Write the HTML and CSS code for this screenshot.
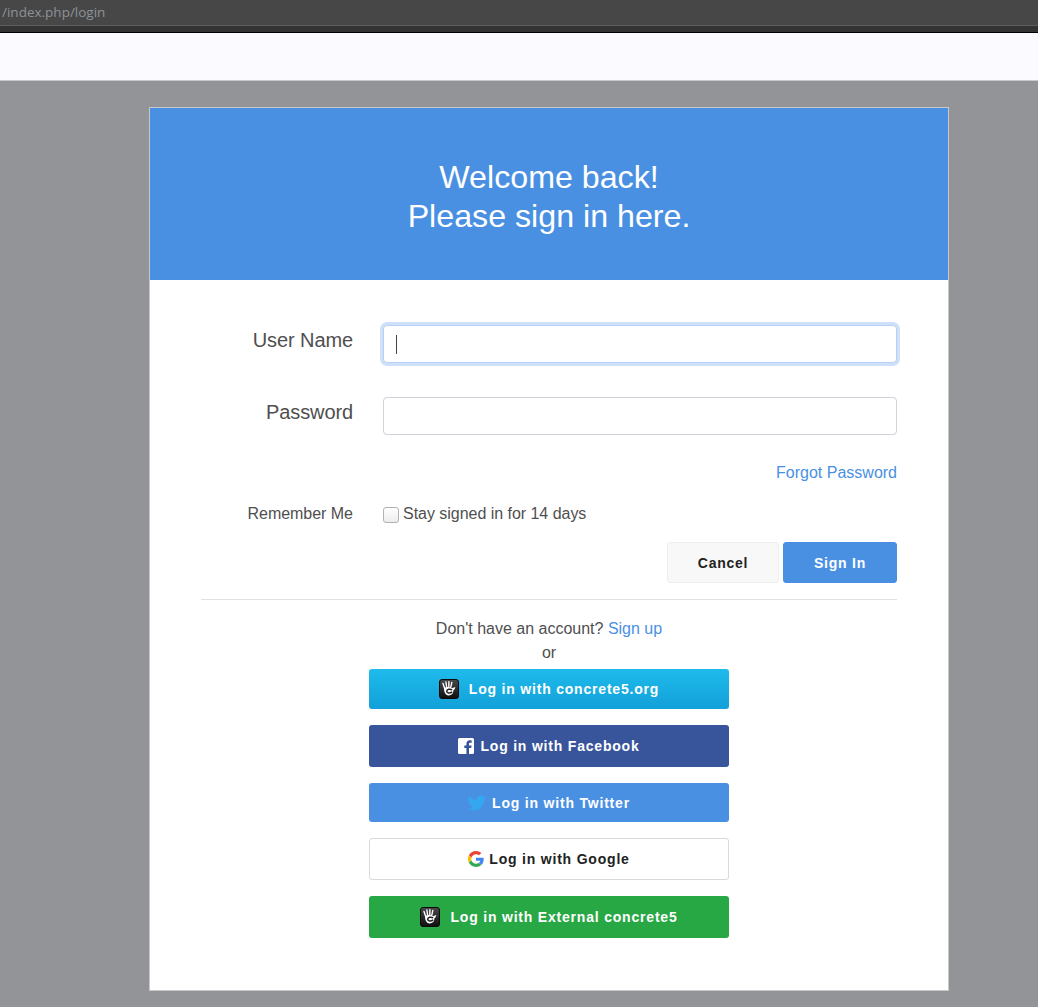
FILE: index.html
```html
<!DOCTYPE html>
<html lang="en">
<head>
<meta charset="utf-8">
<title>Login</title>
<link rel="stylesheet" href="styles.css">
</head>
<body>
<svg class="defs" width="0" height="0" aria-hidden="true">
  <defs>
    <linearGradient id="c5bg" x1="0" y1="0" x2="0" y2="1"><stop offset="0" stop-color="#4a4a4a"/><stop offset="1" stop-color="#0e0e0e"/></linearGradient>
    <symbol id="c5" viewBox="0 0 20 20">
      <rect x="0.5" y="0.5" width="19" height="19" rx="2.5" fill="url(#c5bg)" stroke="#0a0a0a"/>
      <path d="M4 4.500 5.700 9.500M6.900 3 7.700 8.500M9.900 2.600 9.800 8.300M12.800 3.400 11.700 8.700" stroke="#fff" stroke-width="1.400" stroke-linecap="round" fill="none"/>
      <path d="M5 9.200C7 7.700 11 7.700 12.800 9.300L16.300 8C16.400 9.500 15.200 10.900 14.200 11.800 14.600 14.600 12.200 16.600 9.400 16.400 6.400 16.200 4.900 12.400 5 9.200Z" fill="#fff"/>
      <path d="M13.200 11C11 9.500 7.800 10.200 7.700 12.300 7.700 14 10.400 14.700 13.200 13" stroke="#222" stroke-width="1.500" fill="none"/>
    </symbol>
  </defs>
</svg>
<header class="browser-bar"><span class="url">/index.php/login</span></header>
<div class="top-band"></div>
<main class="backdrop">
  <section class="card">
    <div class="card-head">
      <h1>Welcome back!<br>Please sign in here.</h1>
    </div>
    <form class="card-body">
      <div class="row row-user">
        <label class="label label-lg">User Name</label>
        <div class="field field-focus"><span class="caret"></span></div>
      </div>
      <div class="row row-pass">
        <label class="label label-lg">Password</label>
        <div class="field"></div>
      </div>
      <div class="forgot"><a href="#">Forgot Password</a></div>
      <div class="row row-remember">
        <label class="label">Remember Me</label>
        <div class="check-wrap"><span class="check"></span><span>Stay signed in for 14 days</span></div>
      </div>
      <div class="actions">
        <button type="button" class="btn btn-cancel">Cancel</button>
        <button type="button" class="btn btn-signin">Sign In</button>
      </div>
      <hr class="rule">
      <div class="signup">
        <p>Don't have an account? <a href="#">Sign up</a></p>
        <p class="or">or</p>
      </div>
      <div class="socials">
        <a class="social s-c5" href="#"><svg class="ico-c5" width="20" height="20"><use href="#c5"/></svg><span>Log in with concrete5.org</span></a>
        <a class="social s-fb" href="#"><svg class="ico-sm" viewBox="0 0 16 16" width="16" height="16"><path fill="#fff" d="M1.500 0h13A1.500 1.500 0 0 1 16 1.500v13a1.500 1.500 0 0 1-1.500 1.500H11V10h2.200l.4-2.500H11V6c0-.8.300-1.300 1.300-1.300h1.400V2.400c-.4 0-1.200-.1-2-.1C9.700 2.300 8.400 3.500 8.400 5.700v1.800H6.300V10h2.100v6H1.500A1.500 1.500 0 0 1 0 14.500v-13A1.500 1.500 0 0 1 1.500 0Z"/></svg><span>Log in with Facebook</span></a>
        <a class="social s-tw" href="#"><svg class="ico-sm ico-tw" viewBox="0 0 24 24" width="18" height="18"><path fill="#33a8f0" d="M23.950 4.570a10 10 0 0 1-2.820.77 4.960 4.960 0 0 0 2.160-2.720c-.950.550-2 .960-3.130 1.190a4.920 4.920 0 0 0-8.380 4.480C7.690 8.100 4.070 6.130 1.640 3.160a4.820 4.820 0 0 0-.660 2.470c0 1.710.870 3.210 2.190 4.100a4.900 4.900 0 0 1-2.230-.620v.060a4.920 4.920 0 0 0 3.950 4.830 5 5 0 0 1-2.210.080 4.940 4.940 0 0 0 4.600 3.420A9.870 9.870 0 0 1 0 19.540a14 14 0 0 0 7.560 2.210c9.050 0 14-7.500 14-13.980 0-.210 0-.420-.020-.630a9.940 9.940 0 0 0 2.410-2.550Z"/></svg><span>Log in with Twitter</span></a>
        <a class="social s-g" href="#"><svg class="ico-g" viewBox="0 0 48 48" width="16" height="16"><path fill="#ea4335" d="M24 9.500c3.500 0 6.700 1.200 9.200 3.600l6.900-6.900C35.900 2.400 30.500 0 24 0 14.600 0 6.500 5.400 2.600 13.200l8 6.200C12.400 13.700 17.700 9.500 24 9.500Z"/><path fill="#4285f4" d="M47 24.500c0-1.600-.1-3.100-.4-4.500H24v9h12.900c-.6 3-2.200 5.500-4.800 7.200l7.700 6c4.500-4.200 7.200-10.300 7.200-17.700Z"/><path fill="#fbbc05" d="M10.500 28.600a14.500 14.500 0 0 1 0-9.200l-8-6.200a24 24 0 0 0 0 21.600l8-6.200Z"/><path fill="#34a853" d="M24 48c6.500 0 11.900-2.100 15.900-5.800l-7.700-6c-2.200 1.400-4.900 2.300-8.200 2.300-6.300 0-11.600-4.200-13.500-9.900l-8 6.200C6.500 42.600 14.600 48 24 48Z"/></svg><span>Log in with Google</span></a>
        <a class="social s-ext" href="#"><svg class="ico-c5" width="20" height="20"><use href="#c5"/></svg><span>Log in with External concrete5</span></a>
      </div>
    </form>
  </section>
</main>
</body>
</html>
```
FILE: styles.css
```css
* { box-sizing: border-box; }
html, body { margin: 0; padding: 0; height: 100%; }
body {
  font-family: "Liberation Sans", Arial, sans-serif;
  color: #4f4f4f;
  background: #939498;
  overflow: hidden;
}
.defs { position: absolute; }
.browser-bar {
  height: 33px;
  background: #474748;
  border-bottom: 1px solid #000;
  box-shadow: inset 0 -6px 0 #333334, inset 0 -7px 0 #5c5c5c;
  padding-left: 2px;
  overflow: hidden;
}
.url {
  display: block;
  font-family: "Open Sans", "Noto Sans", sans-serif;
  font-size: 13.5px;
  line-height: 24px;
  color: #8d9297;
}
.top-band {
  height: 48px;
  background: #fbfaff;
  border-bottom: 1px solid #c9c9cb;
}
.backdrop { padding: 26px 0 0 149px; }
.card {
  width: 800px;
  height: 884px;
  background: #fff;
  border: 1px solid #c8c8cb;
}
.card-head {
  height: 172px;
  background: #4a90e2;
  padding-top: 50px;
  text-align: center;
}
.card-head h1 {
  margin: 0;
  font-size: 32.2px;
  font-weight: 400;
  line-height: 39px;
  color: #fff;
}
.card-body { padding: 45px 51px 0 51px; }
.row { display: flex; }
.label {
  width: 152px;
  margin-right: 30px;
  text-align: right;
  font-size: 16px;
  letter-spacing: -0.03px;
  color: #4f4f4f;
}
.label-lg { font-size: 20px; line-height: 30px; letter-spacing: -0.1px; }
.row-pass { margin-top: 34px; }
.field {
  flex: 1;
  height: 38px;
  border: 1px solid #ced4da;
  border-radius: 4px;
  background: #fff;
  display: flex;
  align-items: center;
  padding-left: 12px;
}
.field-focus {
  border-color: #b4d0f4;
  box-shadow: 0 0 0 3px #cfe1f9;
}
.caret { width: 1px; height: 19px; background: #444; }
.forgot {
  margin-top: 28px;
  text-align: right;
  font-size: 16px;
  line-height: 20px;
}
a { color: #4a90e2; text-decoration: none; }
.row-remember { margin-top: 21px; align-items: center; height: 20px; line-height: 20px; }
.check-wrap { display: flex; align-items: center; font-size: 16px; letter-spacing: -0.03px; }
.check {
  width: 16px;
  height: 16px;
  margin-right: 4px;
  margin-top: 2px;
  border: 1px solid #b5b1ad;
  border-radius: 3px;
  background: linear-gradient(#fff, #ececec);
}
.actions {
  display: flex;
  justify-content: flex-end;
  gap: 4px;
  margin-top: 18px;
}
.btn {
  height: 41px;
  border-radius: 3px;
  font-family: inherit;
  font-size: 14px;
  font-weight: 700;
  letter-spacing: 0.75px;
  padding: 0;
}
.btn-cancel { width: 112px; background: #f8f8f8; border: 1px solid #eeeeee; color: #222; }
.btn-signin { width: 114px; background: #4a90e2; border: 1px solid #4a90e2; color: #fff; }
.rule { margin: 16px 0 0; border: 0; border-top: 1px solid #e2e2e2; }
.signup {
  margin-left: 168px;
  width: 360px;
  text-align: center;
  font-size: 16px;
  line-height: 24px;
  padding-top: 17px;
}
.signup p { margin: 0; }
.socials {
  margin-left: 168px;
  margin-top: 4px;
  width: 360px;
  display: flex;
  flex-direction: column;
}
.social {
  display: flex;
  align-items: center;
  justify-content: center;
  border-radius: 3px;
  font-size: 14px;
  font-weight: 700;
  letter-spacing: 0.8px;
  color: #fff;
}
.s-c5 { height: 40px; background: linear-gradient(#1fbbec, #12a0d8); }
.s-fb { height: 42px; margin-top: 16px; background: #38549a; }
.s-tw { height: 39px; margin-top: 16px; background: #4a90e2; }
.s-g { height: 42px; margin-top: 16px; background: #fff; border: 1px solid #d9d9de; color: #222; }
.s-ext { height: 42px; margin-top: 16px; background: #28a745; }
.ico-c5 { margin-right: 10px; }
.ico-sm { margin-right: 6px; }
.ico-g { margin-right: 5px; }
```
